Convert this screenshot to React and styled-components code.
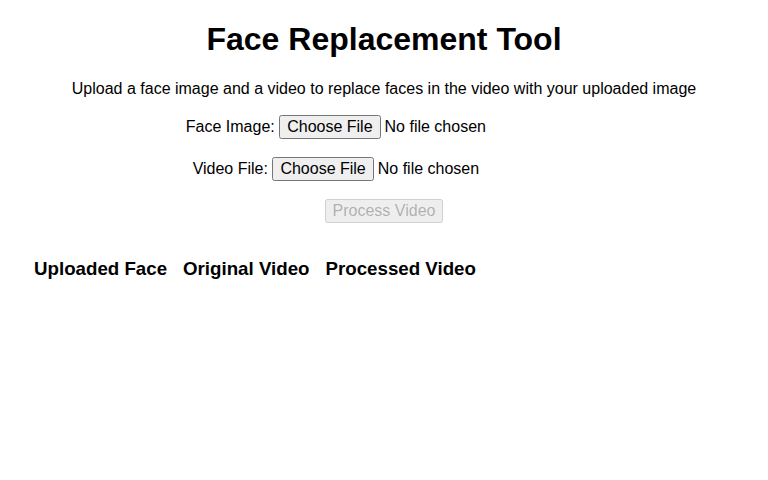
import React from 'react';
import styled, { createGlobalStyle } from 'styled-components';

const GlobalStyle = createGlobalStyle`
    body {
        margin: 8px;
        background: #fff;
        color: #000;
        font-family: "Liberation Sans", Arial, sans-serif;
    }
`;

const Page = styled.div`
    display: flex;
    flex-direction: column;
`;

const Title = styled.h1`
    margin: 13.44px 0 21.44px;
    font-size: 32px;
    font-weight: bold;
    text-align: center;
`;

const Intro = styled.p`
    margin: 0 0 17px;
    font-size: 16px;
    text-align: center;
`;

const Form = styled.form`
    display: flex;
    flex-direction: column;
    align-items: center;
    gap: 18px;
`;

const Field = styled.div`
    font-size: 16px;
    line-height: 24px;
`;

const FileInput = styled.input`
    font: inherit;
`;

const SubmitButton = styled.button`
    font: inherit;
`;

const Previews = styled.div`
    display: flex;
    gap: 16px;
    padding-left: 26px;
    margin-top: 35px;
`;

const PreviewTitle = styled.h3`
    margin: 0;
    font-size: 18.72px;
    font-weight: bold;
`;

const App = () => {
    return (
        <Page>
            <GlobalStyle />
            <Title>Face Replacement Tool</Title>
            <Intro>Upload a face image and a video to replace faces in the video with your uploaded image</Intro>
            <Form onSubmit={e => e.preventDefault()}>
                <Field>
                    <label>Face Image: </label>
                    <FileInput type="file" accept="image/*" />
                </Field>
                <Field>
                    <label>Video File: </label>
                    <FileInput type="file" accept="video/*" />
                </Field>
                <SubmitButton type="submit" disabled>Process Video</SubmitButton>
            </Form>
            <Previews>
                <div><PreviewTitle>Uploaded Face</PreviewTitle></div>
                <div><PreviewTitle>Original Video</PreviewTitle></div>
                <div><PreviewTitle>Processed Video</PreviewTitle></div>
            </Previews>
        </Page>
    );
};

export default App;
